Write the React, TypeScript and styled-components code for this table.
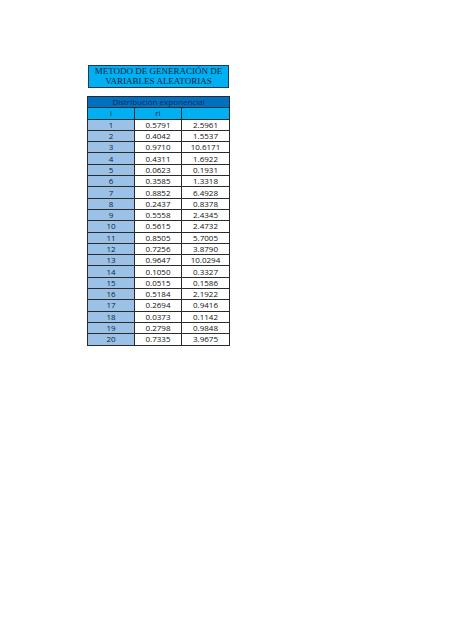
import React from "react";
import styled, { createGlobalStyle } from "styled-components";

const Global = createGlobalStyle`
  html, body { margin: 0; padding: 0; background: #ffffff; }
  body { width: 474px; height: 632px; overflow: hidden; }
`;

const Page = styled.div`
  display: flex;
  flex-direction: column;
  padding: 65px 0 0 87px;
  gap: 8px;
`;

const TitleBox = styled.div`
  box-sizing: border-box;
  width: 141px;
  height: 23px;
  margin-left: 1px;
  background: #00b0f0;
  border: 1px solid #1f3a56;
  display: flex;
  flex-direction: column;
  align-items: center;
  justify-content: center;
  font-family: "Liberation Serif", "Times New Roman", serif;
  font-size: 9px;
  line-height: 9.4px;
  color: #0a1f44;
  text-align: center;
`;

const Table = styled.table`
  border-collapse: collapse;
  width: 142px;
  table-layout: fixed;
  font-family: "Open Sans", "DejaVu Sans", sans-serif;
  font-size: 8px;
  color: #111111;
`;

const HeadCell = styled.th`
  background: #0070c0;
  color: #0b2a5c;
  font-weight: 400;
  height: 10.3px;
  padding: 0;
  line-height: 10px;
  border: 1px solid #2b2b2b;
  font-size: 8px;
`;

const SubCell = styled.th`
  background: #00b0f0;
  color: #1a2a3a;
  font-weight: 400;
  height: 10.3px;
  padding: 0;
  line-height: 10px;
  border: 1px solid #2b2b2b;
`;

const Cell = styled.td<{ $index?: boolean }>`
  background: ${(p) => (p.$index ? "#9bc2e6" : "#ffffff")};
  text-align: center;
  height: 10.3px;
  padding: 0;
  line-height: 10px;
  border: 1px solid #2b2b2b;
  color: ${(p) => (p.$index ? "#0d2240" : "#111111")};
`;

const rows: [string, string][] = [
  ["0.5791", "2.5961"],
  ["0.4042", "1.5537"],
  ["0.9710", "10.6171"],
  ["0.4311", "1.6922"],
  ["0.0623", "0.1931"],
  ["0.3585", "1.3318"],
  ["0.8852", "6.4928"],
  ["0.2437", "0.8378"],
  ["0.5558", "2.4345"],
  ["0.5615", "2.4732"],
  ["0.8505", "5.7005"],
  ["0.7256", "3.8790"],
  ["0.9647", "10.0294"],
  ["0.1050", "0.3327"],
  ["0.0515", "0.1586"],
  ["0.5184", "2.1922"],
  ["0.2694", "0.9416"],
  ["0.0373", "0.1142"],
  ["0.2798", "0.9848"],
  ["0.7335", "3.9675"],
];

export default function App() {
  return (
    <>
      <Global />
      <Page>
        <TitleBox>
          <span>METODO DE GENERACIÓN DE</span>
          <span>VARIABLES ALEATORIAS</span>
        </TitleBox>
        <Table>
          <colgroup>
            <col style={{ width: "47px" }} />
            <col style={{ width: "47px" }} />
            <col style={{ width: "48px" }} />
          </colgroup>
          <thead>
            <tr>
              <HeadCell colSpan={3}>Distribución exponencial</HeadCell>
            </tr>
            <tr>
              <SubCell>i</SubCell>
              <SubCell>ri</SubCell>
              <SubCell></SubCell>
            </tr>
          </thead>
          <tbody>
            {rows.map((r, i) => (
              <tr key={i}>
                <Cell $index>{i + 1}</Cell>
                <Cell>{r[0]}</Cell>
                <Cell>{r[1]}</Cell>
              </tr>
            ))}
          </tbody>
        </Table>
      </Page>
    </>
  );
}
